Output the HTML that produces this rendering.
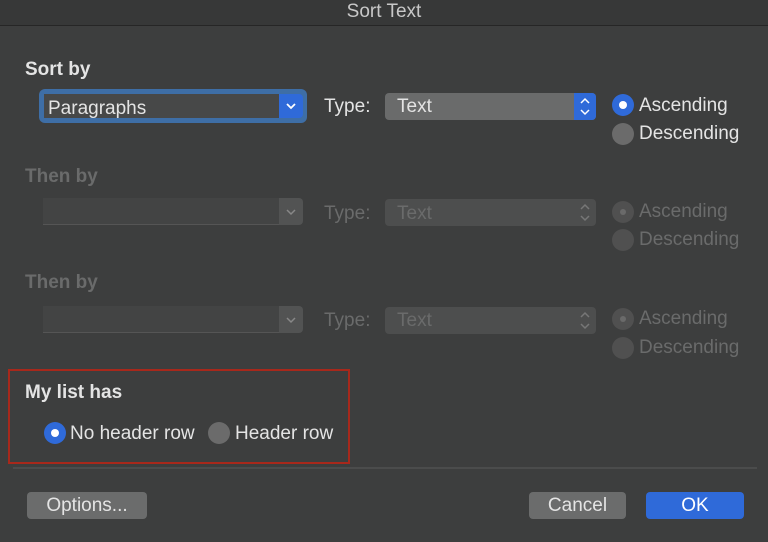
<!DOCTYPE html><html><head><style>
*{margin:0;padding:0;box-sizing:border-box}
body{width:768px;height:542px;background:#3d3e3e;font-family:"Liberation Sans",Arial,sans-serif;position:relative;overflow:hidden;color:#e4e4e4}
.a{position:absolute;white-space:nowrap}
.t{font-size:19px;line-height:22px}
.b{font-weight:bold}
.d{color:#6a6b6b}
.radio{position:absolute;width:22px;height:22px;border-radius:50%;background:#6b6b6b}
.radio.on{background:#2f6ad9}
.radio.on:after{content:"";position:absolute;left:7px;top:7px;width:8px;height:8px;border-radius:50%;background:#fff}
.radio.dis{background:#505050}
.radio.dison:after{content:"";position:absolute;left:8px;top:8px;width:6px;height:6px;border-radius:50%;background:#6a6a6a}
</style></head><body>
<div class="a" style="left:0;top:0;width:768px;height:26px;background:#373838;border-bottom:1px solid #262626"></div>
<div class="a t" style="left:0;width:768px;top:1px;text-align:center;color:#c8c8c8">Sort Text</div>

<div class="a t b" style="left:25px;top:59px">Sort by</div>
<div class="a" style="left:39px;top:89px;width:268px;height:34px;border-radius:6px;background:#3e6ea6"></div>
<div class="a" style="left:44px;top:94px;width:235px;height:24px;background:#474848"></div>
<div class="a" style="left:279px;top:94px;width:24px;height:24px;background:#2f6ad9;border-radius:0 4px 4px 0"></div>
<svg class="a" style="left:285px;top:101px" width="12" height="10"><path d="M2 3 L6 7 L10 3" stroke="#fff" stroke-width="1.8" fill="none"/></svg>
<div class="a t" style="left:48px;top:98px">Paragraphs</div>
<div class="a t" style="left:324px;top:96px">Type:</div>
<div class="a" style="left:385px;top:93px;width:211px;height:27px;background:#6a6b6b;border-radius:4px"></div>
<div class="a" style="left:574px;top:93px;width:22px;height:27px;background:#2f6ad9;border-radius:0 4px 4px 0"></div>
<svg class="a" style="left:579px;top:96px" width="12" height="21"><path d="M2 7 L6 3 L10 7 M2 14 L6 18 L10 14" stroke="#fff" stroke-width="1.5" fill="none"/></svg>
<div class="a t" style="left:397px;top:96px">Text</div>
<div class="radio on" style="left:612px;top:94px"></div>
<div class="a t" style="left:639px;top:95px">Ascending</div>
<div class="radio" style="left:612px;top:123px"></div>
<div class="a t" style="left:639px;top:123px">Descending</div>

<div class="a t b d" style="left:25px;top:166px">Then by</div>
<div class="a" style="left:43px;top:198px;width:236px;height:27px;background:#434444;border-bottom:1px solid #555"></div>
<div class="a" style="left:279px;top:198px;width:24px;height:27px;background:#525353;border-radius:0 4px 4px 0"></div>
<svg class="a" style="left:285px;top:207px" width="12" height="10"><path d="M2 3 L6 7 L10 3" stroke="#888" stroke-width="1.5" fill="none"/></svg>
<div class="a t d" style="left:324px;top:203px">Type:</div>
<div class="a" style="left:385px;top:199px;width:211px;height:27px;background:#4d4e4e;border-radius:4px"></div>
<svg class="a" style="left:579px;top:202px" width="12" height="21"><path d="M2 7 L6 3 L10 7 M2 14 L6 18 L10 14" stroke="#777" stroke-width="1.5" fill="none"/></svg>
<div class="a t d" style="left:397px;top:203px">Text</div>
<div class="radio dis dison" style="left:612px;top:201px"></div>
<div class="a t d" style="left:639px;top:201px">Ascending</div>
<div class="radio dis" style="left:612px;top:229px"></div>
<div class="a t d" style="left:639px;top:229px">Descending</div>

<div class="a t b d" style="left:25px;top:272px">Then by</div>
<div class="a" style="left:43px;top:306px;width:236px;height:27px;background:#434444;border-bottom:1px solid #555"></div>
<div class="a" style="left:279px;top:306px;width:24px;height:27px;background:#525353;border-radius:0 4px 4px 0"></div>
<svg class="a" style="left:285px;top:315px" width="12" height="10"><path d="M2 3 L6 7 L10 3" stroke="#888" stroke-width="1.5" fill="none"/></svg>
<div class="a t d" style="left:324px;top:310px">Type:</div>
<div class="a" style="left:385px;top:307px;width:211px;height:27px;background:#4d4e4e;border-radius:4px"></div>
<svg class="a" style="left:579px;top:310px" width="12" height="21"><path d="M2 7 L6 3 L10 7 M2 14 L6 18 L10 14" stroke="#777" stroke-width="1.5" fill="none"/></svg>
<div class="a t d" style="left:397px;top:310px">Text</div>
<div class="radio dis dison" style="left:612px;top:308px"></div>
<div class="a t d" style="left:639px;top:308px">Ascending</div>
<div class="radio dis" style="left:612px;top:337px"></div>
<div class="a t d" style="left:639px;top:337px">Descending</div>

<div class="a" style="left:8px;top:369px;width:342px;height:95px;border:2px solid #a8281b"></div>
<div class="a t b" style="left:25px;top:382px">My list has</div>
<div class="radio on" style="left:44px;top:422px"></div>
<div class="a t" style="left:70px;top:423px">No header row</div>
<div class="radio" style="left:208px;top:422px"></div>
<div class="a t" style="left:235px;top:423px">Header row</div>

<div class="a" style="left:13px;top:467px;width:744px;height:2px;background:#4b4c4c"></div>
<div class="a t" style="left:27px;top:492px;width:120px;height:27px;background:#6b6c6c;border-radius:4px;text-align:center;padding-top:3px">Options...</div>
<div class="a t" style="left:529px;top:492px;width:97px;height:27px;background:#6b6c6c;border-radius:4px;text-align:center;padding-top:3px">Cancel</div>
<div class="a t" style="left:646px;top:492px;width:98px;height:27px;background:#2f6ad9;border-radius:4px;text-align:center;padding-top:3px;color:#fff">OK</div>
</body></html>
